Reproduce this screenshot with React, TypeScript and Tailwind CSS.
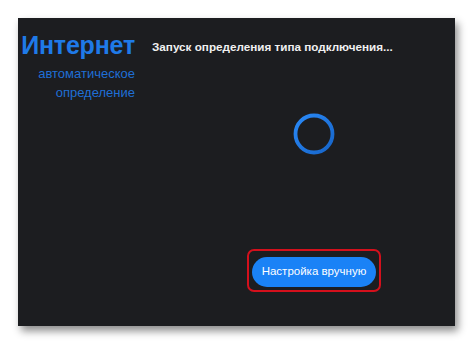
import React from "react";

export default function App() {
  return (
    <div className="w-[474px] h-[345px] bg-white pt-[18px] pl-[18px]" style={{ fontFamily: "'Liberation Sans', Arial, sans-serif" }}>
      <div className="w-[437px] h-[308px] bg-[#1c1d20] flex shadow-[3px_5px_8px_rgba(0,0,0,0.45)]">
        <div className="w-[117px] shrink-0 flex flex-col items-end pt-[12px] text-right">
          <div className="text-[25px] leading-[30px] font-bold text-[#1f7ae8] tracking-[-0.2px]">Интернет</div>
          <div className="text-[13px] leading-[19px] text-[#1f6fd6] mt-[4px]">автоматическое</div>
          <div className="text-[13px] leading-[19px] text-[#1f6fd6]">определение</div>
        </div>
        <div className="flex flex-col items-start pl-[17px] pt-[21px]">
          <div className="text-[11.7px] leading-[15px] font-bold text-[#f0f0f0]">Запуск определения типа подключения...</div>
          <div className="ml-[141px] mt-[59px]">
            <svg width="42" height="42" viewBox="0 0 42 42">
              <defs>
                <linearGradient id="g" x1="0" y1="0" x2="1" y2="1">
                  <stop offset="0" stopColor="#2a8af8" />
                  <stop offset="1" stopColor="#1664c8" />
                </linearGradient>
              </defs>
              <circle cx="21" cy="21" r="18.5" fill="none" stroke="url(#g)" strokeWidth="3.8" />
            </svg>
          </div>
          <div className="ml-[95px] mt-[94px] border-2 border-[#d4101c] rounded-[7px] pt-[6px] pb-[3px] px-[3px]">
            <div className="w-[124px] h-[30px] rounded-full bg-[#1a82f6] flex items-center justify-center text-[11.5px] text-white">
              Настройка вручную
            </div>
          </div>
        </div>
      </div>
    </div>
  );
}
